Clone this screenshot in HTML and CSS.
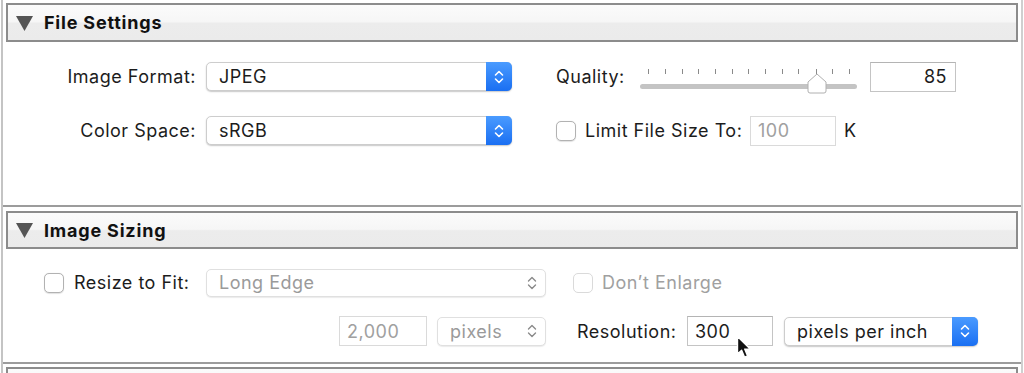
FILE: index.html
```html
<!DOCTYPE html>
<html>
<head>
<meta charset="utf-8">
<link rel="stylesheet" href="styles.css">
</head>
<body>
<div class="panel">
  <section class="section s1">
    <div class="header">
      <svg class="tri" width="17" height="15" viewBox="0 0 17 15"><polygon points="0,0 17,0 8.5,15" fill="#555"/></svg>
      <span class="htitle">File Settings</span>
    </div>
    <div class="content c1">
      <div class="row">
        <div class="lbl">Image Format:</div>
        <div class="select">
          <span class="sval">JPEG</span>
          <span class="sbtn"><svg width="10" height="16" viewBox="0 0 10 16"><path d="M1.5 6 L5 2.5 L8.5 6 M1.5 10 L5 13.5 L8.5 10" fill="none" stroke="#fff" stroke-width="1.6" stroke-linecap="round" stroke-linejoin="round"/></svg></span>
        </div>
        <div class="right">
          <span class="rlbl">Quality:</span>
          <svg class="slider" width="217" height="30" viewBox="0 0 217 30">
            <g fill="#8a8a8a">
              <rect x="8" y="4" width="1" height="5"/><rect x="25" y="4" width="1" height="5"/><rect x="42" y="4" width="1" height="5"/><rect x="58" y="4" width="1" height="5"/><rect x="75" y="4" width="1" height="5"/><rect x="92" y="4" width="1" height="5"/><rect x="108" y="4" width="1" height="5"/><rect x="125" y="4" width="1" height="5"/><rect x="142" y="4" width="1" height="5"/><rect x="158" y="4" width="1" height="5"/><rect x="176" y="4" width="1" height="5"/><rect x="192" y="4" width="1" height="5"/><rect x="209" y="4" width="1" height="5"/>
            </g>
            <rect x="0" y="19" width="217" height="5" rx="2.5" fill="#c4c4c4"/>
            <path d="M168 17 L177 9 L186 17 L186 26 Q186 28 184 28 L170 28 Q168 28 168 26 Z" fill="#fff" stroke="#b0b0b0" stroke-width="1"/>
          </svg>
          <div class="input num q">85</div>
        </div>
      </div>
      <div class="row">
        <div class="lbl">Color Space:</div>
        <div class="select">
          <span class="sval">sRGB</span>
          <span class="sbtn"><svg width="10" height="16" viewBox="0 0 10 16"><path d="M1.5 6 L5 2.5 L8.5 6 M1.5 10 L5 13.5 L8.5 10" fill="none" stroke="#fff" stroke-width="1.6" stroke-linecap="round" stroke-linejoin="round"/></svg></span>
        </div>
        <div class="right">
          <span class="check"></span>
          <span class="rlbl2">Limit File Size To:</span>
          <div class="input dim lim">100</div>
          <span class="unit">K</span>
        </div>
      </div>
    </div>
  </section>
  <section class="section s2">
    <div class="header">
      <svg class="tri" width="17" height="15" viewBox="0 0 17 15"><polygon points="0,0 17,0 8.5,15" fill="#555"/></svg>
      <span class="htitle">Image Sizing</span>
    </div>
    <div class="content c2">
      <div class="row r21">
        <span class="check"></span>
        <span class="fitlbl">Resize to Fit:</span>
        <div class="select disabled wide">
          <span class="sval">Long Edge</span>
          <span class="chev"><svg width="10" height="16" viewBox="0 0 10 16"><path d="M1.5 6 L5 2.5 L8.5 6 M1.5 10 L5 13.5 L8.5 10" fill="none" stroke="#8a8a8a" stroke-width="1.4" stroke-linecap="round" stroke-linejoin="round"/></svg></span>
        </div>
        <span class="check disabled dcheck"></span>
        <span class="dim dlbl">Don’t Enlarge</span>
      </div>
      <div class="row r22">
        <div class="input dim px">2,000</div>
        <div class="select disabled pxsel">
          <span class="sval">pixels</span>
          <span class="chev"><svg width="10" height="16" viewBox="0 0 10 16"><path d="M1.5 6 L5 2.5 L8.5 6 M1.5 10 L5 13.5 L8.5 10" fill="none" stroke="#8a8a8a" stroke-width="1.4" stroke-linecap="round" stroke-linejoin="round"/></svg></span>
        </div>
        <span class="reslbl">Resolution:</span>
        <div class="input res">300</div>
        <div class="select ppi">
          <span class="sval">pixels per inch</span>
          <span class="sbtn"><svg width="10" height="16" viewBox="0 0 10 16"><path d="M1.5 6 L5 2.5 L8.5 6 M1.5 10 L5 13.5 L8.5 10" fill="none" stroke="#fff" stroke-width="1.6" stroke-linecap="round" stroke-linejoin="round"/></svg></span>
        </div>
      </div>
      <svg class="cursor" width="18" height="26" viewBox="0 0 18 26"><path d="M1.5 1.5 L1.5 19 L5.6 15.2 L8.6 22.2 L11.6 20.9 L8.7 14.1 L14.2 14.1 Z" fill="#111" stroke="#fff" stroke-width="1.4" stroke-linejoin="round"/></svg>
    </div>
  </section>
  <section class="section s3">
    <div class="header"></div>
  </section>
</div>
</body>
</html>
```

FILE: styles.css
```css
* { box-sizing: border-box; }
html, body { margin: 0; padding: 0; background: #fff; }
body {
  font-family: Inter, "Noto Sans", "Liberation Sans", sans-serif;
  font-size: 18px;
  letter-spacing: 0.5px;
  color: #1c1c1c;
  width: 1024px;
  height: 373px;
  overflow: hidden;
}
.panel {
  margin: 0 1px;
  border-left: 2px solid #c4c4c4;
  border-right: 2px solid #cfcfcf;
  height: 373px;
  overflow: hidden;
}
.section {
  padding-top: 3px;
  border-bottom: 2px solid #9c9c9c;
  position: relative;
}
.s2 { padding-top: 4px; }
.s3 { border-bottom: none; }
.header {
  margin: 0 3px;
  height: 39px;
  border: 2px solid #8c8c8c;
  background: linear-gradient(#fbfbfb 0%, #f6f6f6 48%, #ececec 52%, #ebebeb 100%);
  display: flex;
  align-items: center;
  padding-left: 8px;
}
.s2 .header { height: 38px; }
.tri { margin-right: 11px; margin-top: 1px; }
.htitle { font-weight: 700; font-size: 18px; color: #111; letter-spacing: 0.8px; }

.content { position: relative; }
.c1 { height: 163px; padding-top: 20px; display: flex; flex-direction: column; gap: 25px; }
.c2 { height: 113px; padding-top: 19px; display: flex; flex-direction: column; gap: 19px; }

.row { display: flex; align-items: center; height: 29px; white-space: nowrap; }
.lbl { width: 193px; text-align: right; margin-right: 10px; }

.select {
  position: relative;
  height: 29px;
  width: 306px;
  border: 1px solid #cdcdcd;
  border-radius: 5px;
  background: #fff;
  box-shadow: 0 1px 1.5px rgba(0,0,0,0.22);
  display: flex;
  align-items: center;
  padding-left: 12px;
  flex: none;
}
.sval { flex: 1; }
.sbtn {
  position: absolute;
  right: -1px; top: -1px; bottom: -1px;
  width: 26px;
  border-radius: 0 5px 5px 0;
  background: linear-gradient(#4a9bff, #1a6ff2);
  display: flex; align-items: center; justify-content: center;
}
.chev { width: 26px; display: flex; align-items: center; justify-content: center; }
.select.disabled { border-color: #e0e0e0; box-shadow: 0 1px 1px rgba(0,0,0,0.08); color: #9a9a9a; }
.select.wide { width: 340px; height: 28px; }
.pxsel { width: 109px; }
.ppi { width: 194px; margin-left: 11px; }

.right { display: flex; align-items: center; margin-left: 44px; height: 29px; }
.rlbl { width: 84px; flex: none; }
.slider { margin-top: 6px; flex: none; }
.input {
  height: 30px;
  border: 1px solid #c4c4c4;
  border-top-color: #b4b4b4;
  background: #fff;
  display: flex;
  align-items: center;
  padding-left: 7px;
  flex: none;
}
.input.num { justify-content: flex-end; padding-right: 8px; }
.q { width: 86px; margin-left: 13px; }
.dim { color: #a0a0a0; }
.input.dim { border-color: #dadada; }
.lim { width: 86px; margin-left: 9px; }
.unit { margin-left: 8px; }

.check {
  width: 20px; height: 20px;
  border: 1px solid #b2b2b2;
  border-radius: 5px;
  background: #fff;
  box-shadow: 0 0.5px 1px rgba(0,0,0,0.12);
  flex: none;
}
.check.disabled { border-color: #dadada; box-shadow: none; }
.rlbl2 { margin-left: 9px; width: 156px; flex: none; }

.r21 .check:first-child { margin-left: 41px; }
.fitlbl { margin-left: 10px; width: 132px; flex: none; }
.dcheck { margin-left: 27px; }
.dlbl { margin-left: 9px; }

.r22 { padding-left: 336px; height: 30px; }
.px { width: 88px; height: 30px; }
.pxsel { margin-left: 10px; }
.reslbl { margin-left: 31px; width: 110px; flex: none; }
.res { width: 86px; }

.cursor { position: absolute; left: 733px; top: 86px; }
```
